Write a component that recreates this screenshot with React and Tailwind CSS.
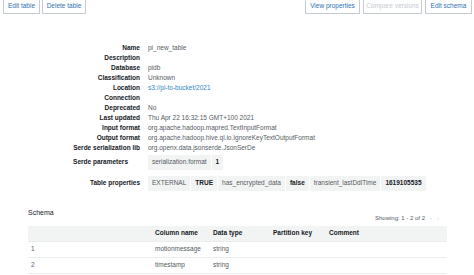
import React from "react";

const rows = [
  ["Name", "pi_new_table"],
  ["Description", ""],
  ["Database", "pidb"],
  ["Classification", "Unknown"],
  ["Location", "s3://pi-to-bucket/2021", true],
  ["Connection", ""],
  ["Deprecated", "No"],
  ["Last updated", "Thu Apr 22 16:32:15 GMT+100 2021"],
  ["Input format", "org.apache.hadoop.mapred.TextInputFormat"],
  ["Output format", "org.apache.hadoop.hive.ql.io.IgnoreKeyTextOutputFormat"],
  ["Serde serialization lib", "org.openx.data.jsonserde.JsonSerDe"],
];

function Btn({ children, w, disabled }) {
  return (
    <div
      className={`h-[16px] border border-[#c3ccd6] flex items-center justify-center bg-white ${
        disabled ? "text-[#c6cbd0]" : "text-[#2f72b3]"
      }`}
      style={{ width: w }}
    >
      {children}
    </div>
  );
}

function Chip({ children, bold }) {
  return (
    <div
      className={`h-[15px] px-[4px] flex items-center bg-[#f2f3f3] ${
        bold ? "font-bold text-[#16191f]" : "text-[#545b64]"
      }`}
    >
      {children}
    </div>
  );
}

export default function App() {
  return (
    <div
      className="w-[474px] h-[275px] bg-white overflow-hidden text-[6.5px] leading-none"
      style={{ fontFamily: '"Liberation Sans", Arial, sans-serif' }}
    >
      <div className="flex justify-between px-[2px] mt-[-2px]">
        <div className="flex gap-[2px] pl-[1px]">
          <Btn w="37px">Edit table</Btn>
          <Btn w="44px">Delete table</Btn>
        </div>
        <div className="flex gap-[3px]">
          <Btn w="55px">View properties</Btn>
          <Btn w="59px" disabled>Compare versions</Btn>
          <Btn w="47px">Edit schema</Btn>
        </div>
      </div>

      <div className="mt-[29px] grid grid-cols-[140px_1fr] gap-x-[8px]">
        {rows.map(([k, v, link]) => (
          <React.Fragment key={k}>
            <div className="h-[10px] flex items-center justify-end font-bold text-[#16191f]">
              {k}
            </div>
            <div
              className={`h-[10px] flex items-center whitespace-nowrap ${
                link ? "text-[#2f86c4]" : "text-[#545b64]"
              }`}
            >
              {v}
            </div>
          </React.Fragment>
        ))}
      </div>

      <div className="mt-[2px] grid grid-cols-[140px_1fr] gap-x-[8px]">
        <div className="flex items-center justify-end pr-[12px] font-bold text-[#16191f]">
          Serde parameters
        </div>
        <div className="flex gap-[1px]">
          <Chip>serialization.format</Chip>
          <Chip bold>1</Chip>
        </div>
      </div>

      <div className="mt-[6px] grid grid-cols-[140px_1fr] gap-x-[8px]">
        <div className="flex items-center justify-end font-bold text-[#16191f]">
          Table properties
        </div>
        <div className="flex gap-[1px]">
          <Chip>EXTERNAL</Chip>
          <Chip bold>TRUE</Chip>
          <Chip>has_encrypted_data</Chip>
          <Chip bold>false</Chip>
          <Chip>transient_lastDdlTime</Chip>
          <Chip bold>1619105535</Chip>
        </div>
      </div>

      <div className="ml-[28px] w-[419px] mt-[17px]">
        <div className="text-[7px] text-[#16191f] h-[8px] flex items-center">Schema</div>
        <div className="flex justify-end items-center h-[8px] mt-[-2px] text-[6px] text-[#545b64] pr-[8px] gap-[5px]">
          <span>Showing: 1 - 2 of 2</span>
          <span className="text-[#d5dbdb]">‹</span>
          <span className="text-[#d5dbdb]">›</span>
        </div>
        <div className="mt-[4px] grid grid-cols-[124px_58px_60px_56px_121px]">
          {["", "Column name", "Data type", "Partition key", "Comment"].map((h, i) => (
            <div
              key={i}
              className="h-[16px] bg-[#f2f3f3] border-b border-[#eaeded] flex items-center pl-[3px] font-bold text-[#16191f]"
            >
              {h}
            </div>
          ))}
          {[
            ["1", "motionmessage", "string"],
            ["2", "timestamp", "string"],
          ].map((r) =>
            [r[0], r[1], r[2], "", ""].map((c, i) => (
              <div
                key={r[0] + i}
                className="h-[16px] border-b border-[#eaeded] flex items-center pl-[3px] text-[#545b64]"
              >
                {c}
              </div>
            ))
          )}
        </div>
      </div>
    </div>
  );
}
